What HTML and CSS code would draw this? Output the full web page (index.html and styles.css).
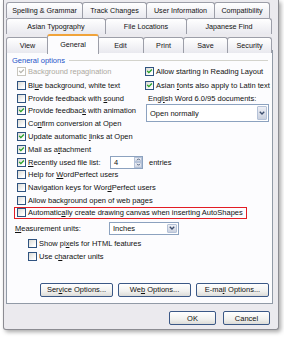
FILE: index.html
```html
<!DOCTYPE html>
<html>
<head>
<meta charset="utf-8">
<title>Options</title>
<link rel="stylesheet" href="styles.css">
</head>
<body>
<div class="window">
  <div class="tabs">
    <div class="tabrow r1">
      <div class="tab">Spelling &amp; Grammar</div>
      <div class="tab">Track Changes</div>
      <div class="tab">User Information</div>
      <div class="tab">Compatibility</div>
    </div>
    <div class="tabrow r2">
      <div class="tab">Asian Typography</div>
      <div class="tab">File Locations</div>
      <div class="tab">Japanese Find</div>
    </div>
    <div class="tabrow r3">
      <div class="tab">View</div>
      <div class="tab sel">General</div>
      <div class="tab">Edit</div>
      <div class="tab">Print</div>
      <div class="tab">Save</div>
      <div class="tab">Security</div>
    </div>
  </div>

  <div class="panel">
    <div class="group-title">General options</div>

    <div class="top">
      <div class="left">
        <div class="row first disabled"><span class="cb dis"><svg viewBox="0 0 9 9"><path d="M2 4.2 L3.7 6 L7 2.5"/></svg></span><span>Background repagination</span></div>
        <div class="row"><span class="cb"></span><span>Bl<u>u</u>e background, white text</span></div>
        <div class="row"><span class="cb"></span><span>Provide feedback with <u>s</u>ound</span></div>
        <div class="row"><span class="cb on"><svg viewBox="0 0 9 9"><path d="M2 4.2 L3.7 6 L7 2.5"/></svg></span><span>Provide feedbac<u>k</u> with animation</span></div>
        <div class="row"><span class="cb"></span><span>Co<u>n</u>firm conversion at Open</span></div>
      </div>
      <div class="right">
        <div class="row first"><span class="cb on"><svg viewBox="0 0 9 9"><path d="M2 4.2 L3.7 6 L7 2.5"/></svg></span><span>Allow starting in Readin<u>g</u> Layout</span></div>
        <div class="row"><span class="cb on"><svg viewBox="0 0 9 9"><path d="M2 4.2 L3.7 6 L7 2.5"/></svg></span><span>Asian <u>f</u>onts also apply to Latin text</span></div>
        <div class="row label-row">Engl<u>i</u>sh Word 6.0/95 documents:</div>
        <div class="combo wide"><span class="combo-text">Open normally</span><span class="drop"><svg viewBox="0 0 9 9"><path d="M2 3.2 L4.5 5.7 L7 3.2"/></svg></span></div>
      </div>
    </div>

    <div class="rows">
      <div class="row"><span class="cb on"><svg viewBox="0 0 9 9"><path d="M2 4.2 L3.7 6 L7 2.5"/></svg></span><span>Update automatic <u>l</u>inks at Open</span></div>
      <div class="row"><span class="cb on"><svg viewBox="0 0 9 9"><path d="M2 4.2 L3.7 6 L7 2.5"/></svg></span><span>Mail as a<u>t</u>tachment</span></div>
      <div class="row"><span class="cb on"><svg viewBox="0 0 9 9"><path d="M2 4.2 L3.7 6 L7 2.5"/></svg></span><span class="recent-label"><u>R</u>ecently used file list:</span>
        <span class="spin"><span class="spin-text">4</span><span class="spin-btns"><span class="sb"><svg viewBox="0 0 6 4"><path d="M1 3 L3 1 L5 3"/></svg></span><span class="sb"><svg viewBox="0 0 6 4"><path d="M1 1 L3 3 L5 1"/></svg></span></span></span>
        <span class="entries">entries</span></div>
      <div class="row"><span class="cb"></span><span>Help for <u>W</u>ordPerfect users</span></div>
      <div class="row"><span class="cb"></span><span>Navigation keys for Wor<u>d</u>Perfect users</span></div>
      <div class="row"><span class="cb"></span><span>Allow background open of web pages</span></div>
    </div>

    <div class="row hl"><span class="cb"></span><span>Automatic<u>a</u>lly create drawing canvas when inserting AutoShapes</span></div>

    <div class="row meas"><span class="meas-label"><u>M</u>easurement units:</span>
      <div class="combo narrow"><span class="combo-text">Inches</span><span class="drop"><svg viewBox="0 0 9 9"><path d="M2 3.2 L4.5 5.7 L7 3.2"/></svg></span></div>
    </div>
    <div class="row sub first-sub"><span class="cb"></span><span>Show pi<u>x</u>els for HTML features</span></div>
    <div class="row sub"><span class="cb"></span><span>Use c<u>h</u>aracter units</span></div>

    <div class="btnrow">
      <div class="btn">Ser<u>v</u>ice Options...</div>
      <div class="btn">We<u>b</u>&nbsp;Options...</div>
      <div class="btn">E-ma<u>i</u>l Options...</div>
    </div>
  </div>

  <div class="footer">
    <div class="btn small">OK</div>
    <div class="btn small">Cancel</div>
  </div>
</div>
</body>
</html>
```

FILE: styles.css
```css
* { box-sizing: border-box; }
html, body { margin: 0; padding: 0; }
body {
  width: 284px;
  height: 338px;
  background: #ffffff;
  font-family: "Liberation Sans", Arial, sans-serif;
  font-size: 7.5px;
  color: #111;
  overflow: hidden;
}
u { text-decoration: underline; text-underline-offset: 1px; }

.window {
  margin-left: 3px;
  width: 276px;
  height: 330px;
  background: #ebeaee;
  border: 1px solid #8c8c92;
  border-top: none;
  border-radius: 0 0 3px 3px;
  box-shadow: 2px 2px 4px rgba(0, 0, 0, 0.35);
  padding: 2px 5px 0 2px;
}

/* tabs */
.tabs { display: flex; flex-direction: column; }
.tabrow { display: grid; height: 16px; }
.r1 { grid-template-columns: 76px 64px 68px 55px; }
.r2 { grid-template-columns: 99px 81px 85px; }
.r3 { grid-template-columns: 42px 49px 46px 40px 44px 44px; align-items: end; }
.tab {
  height: 16px;
  border: 1px solid #9c9ea8;
  border-bottom: none;
  border-radius: 3px 3px 0 0;
  margin-right: -1px;
  background: linear-gradient(#ffffff, #e9e9ef);
  display: flex;
  align-items: center;
  justify-content: center;
  font-size: 7.2px;
  white-space: nowrap;
  overflow: hidden;
}
.tab.sel {
  position: relative;
  z-index: 1;
  height: 20px;
  margin: 0 -2px -1px -1px;
  border-top: 2px solid #f0a33a;
  background: #fcfcfe;
  padding-bottom: 1px;
}

/* panel */
.panel {
  height: 254px;
  border: 1px solid #919aa6;
  background: #fcfcfe;
  padding-left: 10px;
  display: flex;
  flex-direction: column;
}
.group-title {
  margin-top: 4px;
  margin-left: -5px;
  height: 10px;
  display: flex;
  align-items: center;
  color: #1d52c8;
  white-space: nowrap;
}
.group-title::after {
  content: "";
  flex: 1;
  height: 1px;
  background: #d3d3cc;
  margin: 0 4px 0 4px;
}

.top { display: flex; }
.left { width: 128px; flex: none; }
.right { flex: 1; }

.row {
  height: 12.8px;
  display: flex;
  align-items: center;
  white-space: nowrap;
}
.row.first { height: 12px; margin-bottom: 2px; }
.disabled { color: #aca9a0; }
.label-row { padding-left: 3px; }

.cb {
  flex: none;
  width: 9px;
  height: 9px;
  margin-right: 2px;
  border: 1px solid #2f5380;
  background: linear-gradient(135deg, #d9d9d4, #ffffff 80%);
  display: flex;
}
.cb.dis { border-color: #c8c6be; background: #ffffff; }
.cb svg { width: 7px; height: 7px; }
.cb path { fill: none; stroke: #22a022; stroke-width: 1.6; stroke-linecap: square; }
.cb.dis path { stroke: #b8b6ae; }

/* combo boxes */
.combo {
  display: flex;
  align-items: stretch;
  border: 1px solid #8ca2bf;
  background: #ffffff;
  padding: 1px;
}
.combo.wide { width: 123px; height: 18px; margin-left: 1px; margin-top: -0.6px; }
.combo.narrow { width: 70px; height: 13px; }
.combo-text { flex: 1; display: flex; align-items: center; padding-left: 2px; }
.drop {
  width: 10px;
  flex: none;
  border: 1px solid #b5c2d8;
  border-radius: 1px;
  background: linear-gradient(#eef0f6, #c9d0de);
  display: flex;
  align-items: center;
  justify-content: center;
}
.drop svg { width: 8px; height: 8px; }
.drop path { fill: none; stroke: #3d4e6e; stroke-width: 1.5; }

.rows { display: flex; flex-direction: column; }
.recent-label { width: 82px; flex: none; }
.spin {
  display: flex;
  width: 33px;
  height: 13px;
  border: 1px solid #8ca2bf;
  background: #ffffff;
  flex: none;
}
.spin-text { flex: 1; display: flex; align-items: center; padding-left: 3px; }
.spin-btns { width: 8px; display: flex; flex-direction: column; }
.sb {
  flex: 1;
  border: 1px solid #b5c2d8;
  background: linear-gradient(#eef0f6, #cfd6e3);
  display: flex;
  align-items: center;
  justify-content: center;
}
.sb svg { width: 5px; height: 3px; }
.sb path { fill: none; stroke: #3d4e6e; stroke-width: 1.2; }
.entries { margin-left: 6px; }

.row.hl {
  height: 12px;
  align-self: flex-start;
  margin-left: -3px;
  padding: 0 3px 0 2px;
  border: 1px solid #e21c24;
}
.row.meas { height: 13px; margin-top: 3px; }
.meas-label { width: 94px; margin-left: -2px; flex: none; }
.row.sub { height: 13px; padding-left: 11px; }
.row.first-sub { margin-top: 2.5px; }

/* buttons */
.btnrow {
  margin-top: 19.5px;
  display: flex;
  justify-content: flex-end;
  gap: 5px;
  padding-right: 3px;
}
.btn {
  width: 73px;
  height: 14px;
  border: 1px solid #3b5886;
  border-radius: 2px;
  background: linear-gradient(#ffffff, #f1f1ef 60%, #dcdcd8);
  display: flex;
  align-items: center;
  justify-content: center;
  white-space: nowrap;
}
.btn.small { width: 47px; }
.footer {
  margin-top: 7px;
  display: flex;
  justify-content: flex-end;
  gap: 7px;
  padding-right: 3px;
}
```
